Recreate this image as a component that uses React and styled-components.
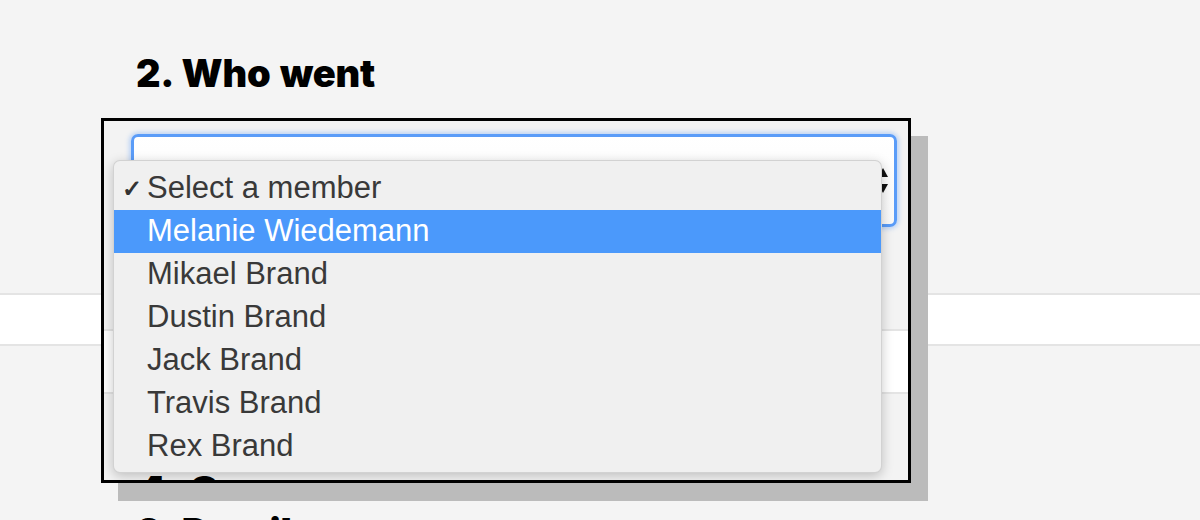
import React from "react";
import styled, { createGlobalStyle } from "styled-components";

const GlobalStyle = createGlobalStyle`
  html, body {
    margin: 0;
    padding: 0;
    background: #f4f4f4;
  }
  * { box-sizing: border-box; }
`;

const Page = styled.div`
  position: relative;
  width: 1200px;
  height: 520px;
  overflow: hidden;
  background: #f4f4f4;
  display: flex;
  flex-direction: column;
`;

const Heading = styled.h2`
  margin: ${(p) => p.$margin || "0"};
  padding-left: ${(p) => p.$indent || 136}px;
  font-family: Inter, "Liberation Sans", sans-serif;
  font-weight: 900;
  font-size: ${(p) => p.$size || 38}px;
  line-height: 44px;
  letter-spacing: -0.2px;
  word-spacing: 2px;
  color: #000;
  flex-shrink: 0;
`;

const Band = styled.div`
  margin-top: ${(p) => p.$top}px;
  height: ${(p) => p.$height}px;
  background: #fff;
  border-top: 2px solid #e4e4e4;
  border-bottom: 2px solid #e4e4e4;
  flex-shrink: 0;
`;

/* magnified picture of the open select, laid over the page */
const Zoom = styled.div`
  position: absolute;
  left: 101px;
  top: 118px;
  width: 810px;
  height: 365px;
  border: 3px solid #000;
  background: #f3f3f3;
  box-shadow: 17px 18px 0 #bbbbbb;
  overflow: hidden;
  display: flex;
  flex-direction: column;
`;

const SelectBox = styled.div`
  position: relative;
  margin: 13px 0 0 27px;
  width: 766px;
  height: 93px;
  flex-shrink: 0;
  border: 3px solid #5a9cf8;
  border-radius: 7px;
  background: linear-gradient(#ffffff, #f9f9f9);
  box-shadow: 0 0 4px 2px rgba(90, 156, 248, 0.35);
`;

const Arrows = styled.svg`
  position: absolute;
  right: 6px;
  top: 31px;
`;

const Menu = styled.ul`
  position: absolute;
  left: 9px;
  top: 39px;
  width: 769px;
  height: 313px;
  margin: 0;
  padding: 6px 0 5px;
  list-style: none;
  background: #f0f0f0;
  border: 1px solid rgba(0, 0, 0, 0.12);
  border-radius: 7px;
  box-shadow: 0 3px 12px rgba(0, 0, 0, 0.22);
  z-index: 2;
`;

const Item = styled.li`
  position: relative;
  height: 43px;
  display: flex;
  align-items: center;
  padding-left: 33px;
  padding-bottom: 1px;
  font-family: "Liberation Sans", Arial, sans-serif;
  font-size: 31px;
  color: ${(p) => (p.$active ? "#ffffff" : "#393939")};
  background: ${(p) => (p.$active ? "#4b99fb" : "transparent")};
`;

const Check = styled.span`
  position: absolute;
  left: 8px;
  top: 8px;
  font-size: 24px;
  font-weight: 700;
  color: #333;
`;

const members = [
  "Melanie Wiedemann",
  "Mikael Brand",
  "Dustin Brand",
  "Jack Brand",
  "Travis Brand",
  "Rex Brand",
];

export default function App() {
  return (
    <>
      <GlobalStyle />
      <Page>
        <Heading $margin="51px 0 0 0">2. Who went</Heading>
        <Band $top={198} $height={53} />
        <Heading $margin="164px 0 0 0">3. Details</Heading>

        <Zoom>
          <SelectBox>
            <Arrows width="10" height="26" viewBox="0 0 10 26">
              <path d="M5 0 L10 9 L0 9 Z" fill="#111" />
              <path d="M0 16 L10 16 L5 25 Z" fill="#111" />
            </Arrows>
          </SelectBox>
          <Band $top={102} $height={65} />
          <Heading $margin="76px 0 0 0" $indent={32} $size={44}>
            4. Summary
          </Heading>

          <Menu>
            <Item>
              <Check>✓</Check>
              Select a member
            </Item>
            {members.map((name, i) => (
              <Item key={name} $active={i === 0}>
                {name}
              </Item>
            ))}
          </Menu>
        </Zoom>
      </Page>
    </>
  );
}
